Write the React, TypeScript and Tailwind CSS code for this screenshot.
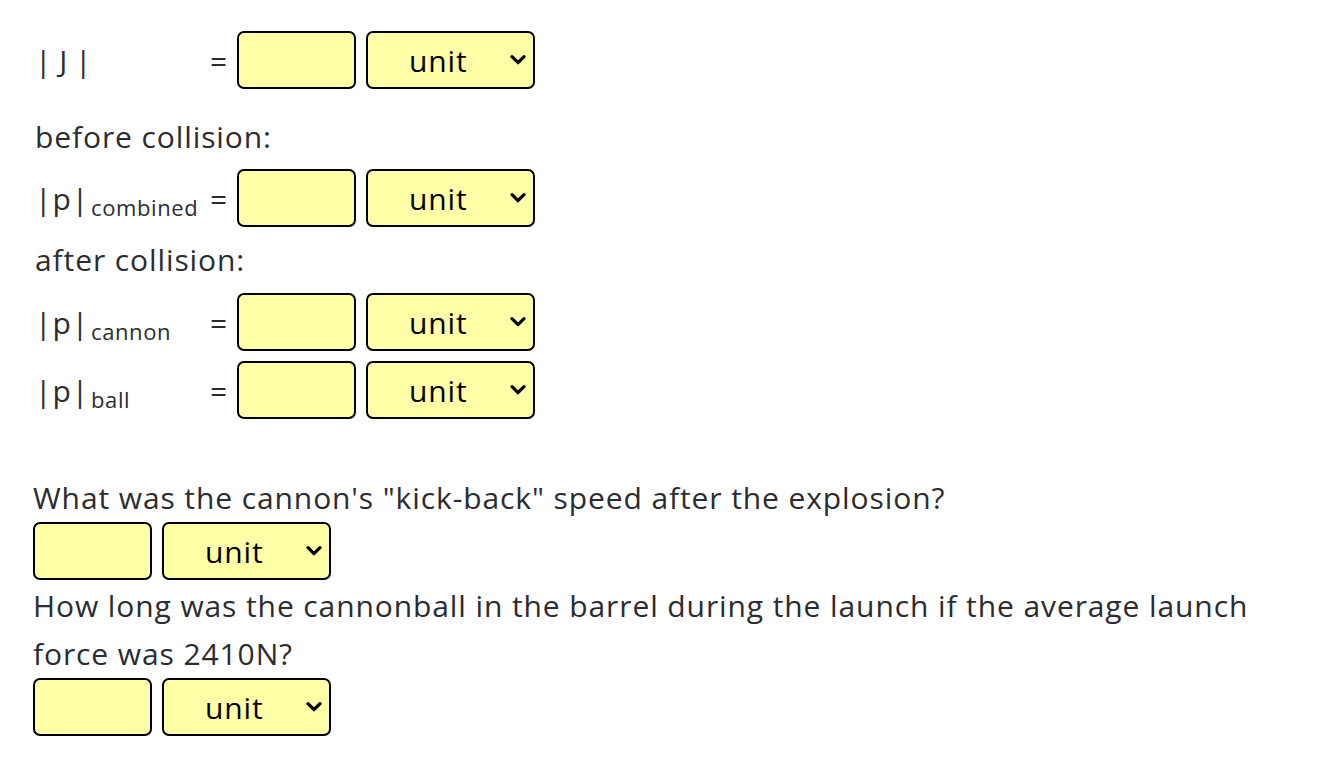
import React from 'react';

const Chevron = () => (
  <svg
    className="pointer-events-none absolute right-[9px] top-1/2 -translate-y-1/2"
    width="16"
    height="11"
    viewBox="0 0 16 11"
    fill="none"
  >
    <path d="M2 2.2 L8 8.2 L14 2.2" stroke="#000" strokeWidth="3.2" strokeLinecap="round" strokeLinejoin="round" />
  </svg>
);

const AnswerBox = () => (
  <div className="flex gap-[10px]">
    <input
      type="text"
      className="h-[58px] w-[119px] rounded-[7px] border-2 border-black bg-[#ffffa8] outline-none"
    />
    <div className="relative h-[58px] w-[169px]">
      <select className="h-full w-full appearance-none rounded-[7px] border-2 border-black bg-[#ffffa8] pl-[41px] text-[30px] tracking-[0.9px] text-black outline-none">
        <option>unit</option>
      </select>
      <Chevron />
    </div>
  </div>
);

const Row = ({ main, sub }: { main: string; sub?: string }) => (
  <div className="flex items-center">
    <div className="flex w-[175px] items-baseline">
      <span className={sub ? 'text-[30px]' : 'text-[30px] tracking-normal'}>{main}</span>
      {sub && <span className="relative top-[6px] ml-[2px] text-[22px] tracking-[0.6px]">{sub}</span>}
    </div>
    <span className="w-[27px] text-[30px]">=</span>
    <AnswerBox />
  </div>
);

export default function App() {
  return (
    <div className="min-h-screen bg-white pt-[31px] pr-[33px] text-[#2a2c30] tracking-[0.9px] [font-family:'Open_Sans',sans-serif]">
      <div className="pl-[35px]">
        <Row main="| J |" />
        <p className="mt-[24px] mb-[8px] text-[30px] leading-[48px]">before collision:</p>
        <Row main="|p|" sub="combined" />
        <p className="mt-[9px] mb-[9px] text-[30px] leading-[48px]">after collision:</p>
        <div className="flex flex-col gap-[10px]">
          <Row main="|p|" sub="cannon" />
          <Row main="|p|" sub="ball" />
        </div>
      </div>
      <div className="mt-[55px] pl-[33px]">
        <p className="text-[30px] leading-[48px]">What was the cannon's "kick-back" speed after the explosion?</p>
        <AnswerBox />
        <p className="mt-[2px] text-[30px] leading-[48px]">
          How long was the cannonball in the barrel during the launch if the average launch force was 2410N?
        </p>
        <AnswerBox />
      </div>
    </div>
  );
}
